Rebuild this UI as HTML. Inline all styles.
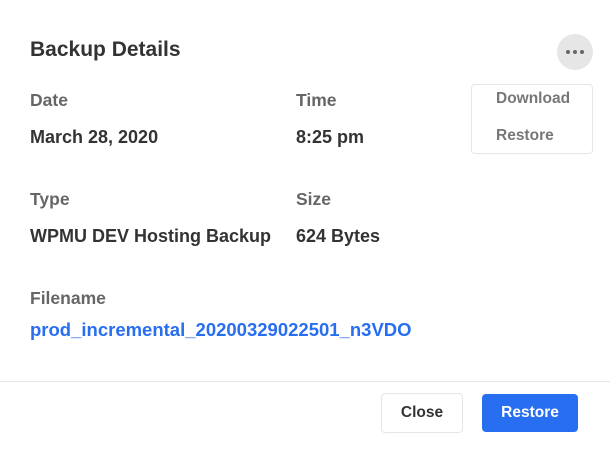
<!DOCTYPE html>
<html><head><style>
*{margin:0;padding:0;box-sizing:border-box}
body{width:610px;height:452px;background:#fff;font-family:"Liberation Sans",Arial,sans-serif;position:relative;overflow:hidden;color:#333}
.a{position:absolute;white-space:nowrap}
.t{font-size:21px;font-weight:bold;color:#333}
.l{font-size:17.5px;font-weight:bold;color:#666}
.v{font-size:18px;font-weight:bold;color:#333}
</style></head><body>
<div class="a t" style="left:30px;top:38px">Backup Details</div>
<div class="a" style="left:557px;top:34px;width:36px;height:36px;border-radius:50%;background:#e6e6e6"></div>
<div class="a" style="left:566px;top:50px;width:4px;height:4px;border-radius:50%;background:#666"></div>
<div class="a" style="left:573px;top:50px;width:4px;height:4px;border-radius:50%;background:#666"></div>
<div class="a" style="left:580px;top:50px;width:4px;height:4px;border-radius:50%;background:#666"></div>
<div class="a" style="left:471px;top:84px;width:122px;height:70px;border:1px solid #e6e6e6;border-radius:4px;background:#fff"></div>
<div class="a" style="left:496px;top:90px;font-size:15.5px;color:#777;font-weight:bold">Download</div>
<div class="a" style="left:496px;top:127px;font-size:15.5px;color:#777;font-weight:bold">Restore</div>
<div class="a l" style="left:30px;top:90px">Date</div>
<div class="a l" style="left:296px;top:90px">Time</div>
<div class="a v" style="left:30px;top:127px">March 28, 2020</div>
<div class="a v" style="left:296px;top:127px">8:25 pm</div>
<div class="a l" style="left:30px;top:189px">Type</div>
<div class="a l" style="left:296px;top:189px">Size</div>
<div class="a v" style="left:30px;top:226px">WPMU DEV Hosting Backup</div>
<div class="a v" style="left:296px;top:226px">624 Bytes</div>
<div class="a l" style="left:30px;top:288px">Filename</div>
<div class="a v" style="left:30px;top:319px;color:#286ef1;font-size:18.5px">prod_incremental_20200329022501_n3VDO</div>
<div class="a" style="left:0;top:381px;width:610px;height:1px;background:#e6e6e6"></div>
<div class="a" style="left:381px;top:393px;width:82px;height:40px;border:1px solid #e6e6e6;border-radius:4px;font-size:15.5px;font-weight:bold;color:#333;text-align:center;line-height:38px">Close</div>
<div class="a" style="left:482px;top:394px;width:96px;height:38px;border-radius:4px;background:#286ef1;font-size:15.5px;font-weight:bold;color:#fff;text-align:center;line-height:38px">Restore</div>
</body></html>
